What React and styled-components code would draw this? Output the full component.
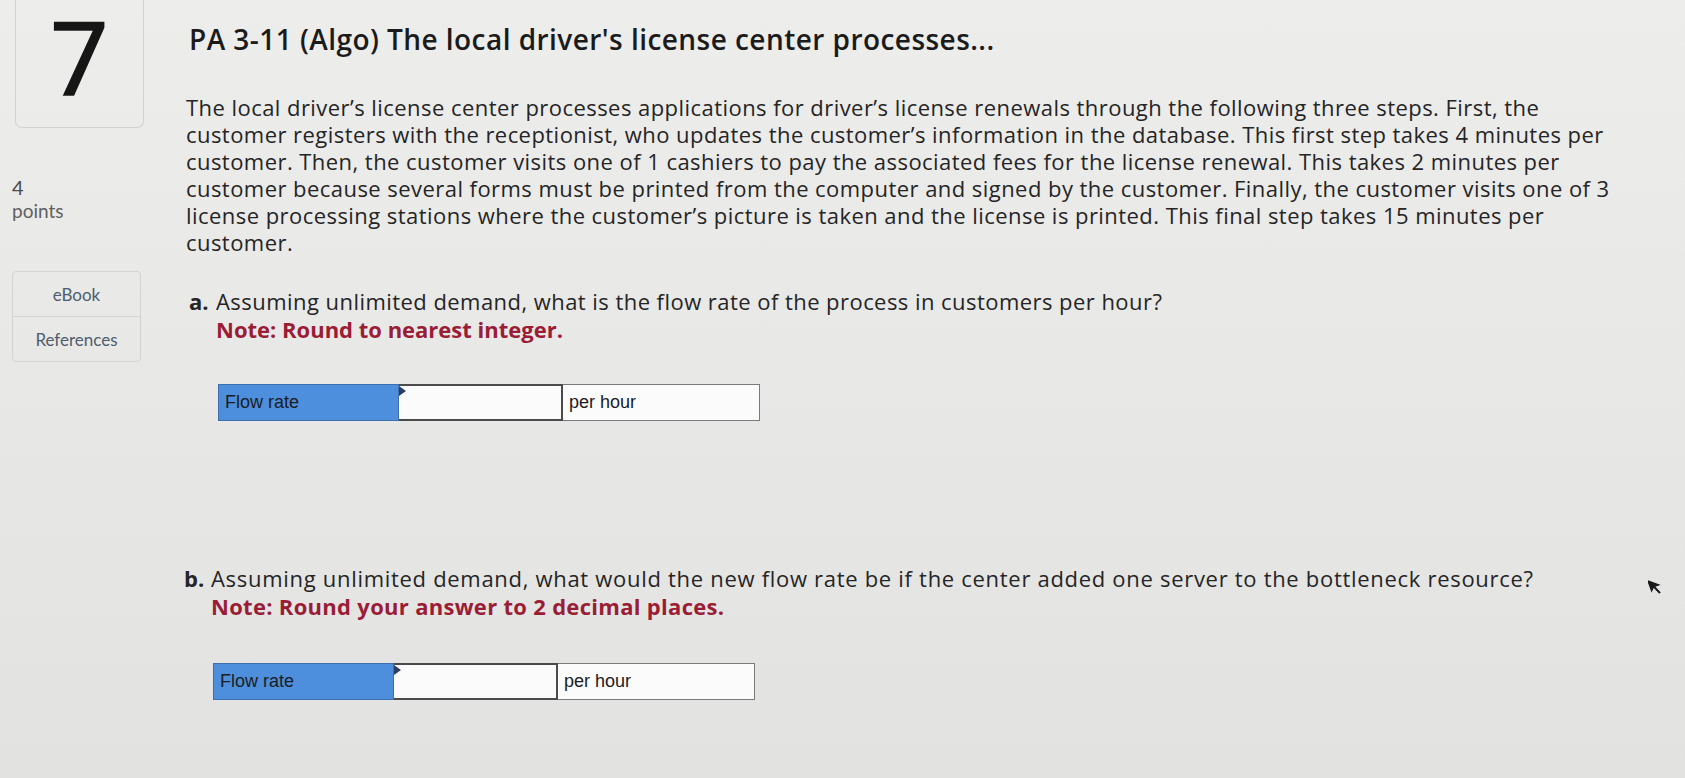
import React from 'react'
import styled, { createGlobalStyle } from 'styled-components'

const GlobalStyle = createGlobalStyle`
  html, body {
    margin: 0;
    padding: 0;
  }
  body {
    font-family: "Open Sans", Lato, sans-serif;
    color: #222;
    background: #e8e8e7;
  }
`

const Page = styled.div`
  position: relative;
  display: flex;
  width: 1685px;
  height: 778px;
  overflow: hidden;
  background: linear-gradient(180deg, #ededec 0%, #e7e7e6 55%, #e2e2e1 100%);
`

const Sidebar = styled.div`
  width: 186px;
  flex-shrink: 0;
  padding-left: 12px;
  box-sizing: border-box;
  display: flex;
  flex-direction: column;
`

const NumberBox = styled.div`
  width: 129px;
  height: 128px;
  margin-left: 3px;
  box-sizing: border-box;
  border: 1px solid #d2d2d1;
  border-top: none;
  border-radius: 0 0 7px 7px;
  display: flex;
  justify-content: center;
  align-items: flex-start;
  font-family: Roboto, sans-serif;
  font-weight: 400;
  font-size: 102px;
  line-height: normal;
  color: #161616;
  -webkit-text-stroke: 1.5px #161616;
`

const Points = styled.div`
  margin-top: 47px;
  font-family: Lato, sans-serif;
  font-size: 19px;
  line-height: 24px;
  color: #5f5f5f;
`

const PointsValue = styled.div`
  font-size: 20px;
  color: #4a4a4a;
`

const LinkStack = styled.div`
  margin-top: 48px;
  width: 129px;
  border: 1px solid #d3d3d2;
  border-radius: 4px;
  box-sizing: border-box;
  font-family: Lato, sans-serif;
`

const LinkButton = styled.div`
  height: 44px;
  display: flex;
  align-items: center;
  justify-content: center;
  font-size: 17px;
  color: #4e5d6d;
  border-top: ${p => (p.$first ? 'none' : '1px solid #d3d3d2')};
`

const Main = styled.div`
  flex: 1;
  display: flex;
  flex-direction: column;
`

const Title = styled.h1`
  margin: 22px 0 0 3px;
  font-size: 28px;
  line-height: 34px;
  font-weight: 600;
  color: #1b1b1b;
  letter-spacing: 0.45px;
  white-space: nowrap;
`

const Body = styled.p`
  margin: 38px 0 0 0;
  font-size: 22px;
  line-height: 27px;
  color: #252525;
  letter-spacing: 0.45px;
  white-space: nowrap;
`

const Question = styled.div`
  display: flex;
  margin-top: ${p => p.$top}px;
  margin-left: ${p => p.$nudge}px;
  font-size: 22px;
  line-height: 28px;
  color: #252525;
  white-space: nowrap;
`

const Marker = styled.span`
  width: 27px;
  flex-shrink: 0;
  font-weight: 700;
`

const QuestionText = styled.div`
  display: flex;
  flex-direction: column;
`

const Prompt = styled.span`
  letter-spacing: ${p => p.$spacing}px;
`

const Note = styled.span`
  font-weight: 700;
  color: #9b1c35;
  letter-spacing: ${p => p.$spacing}px;
`

const AnswerRow = styled.div`
  display: flex;
  height: 37px;
  margin-top: ${p => p.$top}px;
  margin-left: ${p => 32 + p.$nudge}px;
  font-family: "Liberation Sans", Arial, sans-serif;
  font-size: 18px;
  color: #1c1c24;
`

const Label = styled.div`
  width: 181px;
  box-sizing: border-box;
  background: #4d8fdc;
  border: 1px solid #3b6fae;
  display: flex;
  align-items: center;
  padding-left: 6px;
`

const Input = styled.div`
  position: relative;
  width: 164px;
  box-sizing: border-box;
  background: #fbfbfb;
  border: 2px solid #4b4b4b;
  border-left: none;

  &::before {
    content: '';
    position: absolute;
    left: 0;
    top: 0;
    border-top: 5px solid transparent;
    border-bottom: 5px solid transparent;
    border-left: 7px solid #2c3e66;
  }
`

const Unit = styled.div`
  width: 197px;
  box-sizing: border-box;
  background: #fbfbfb;
  border: 1px solid #7b7b7b;
  border-left: none;
  display: flex;
  align-items: center;
  padding-left: 6px;
`

const Cursor = styled.svg`
  position: absolute;
  left: 1648px;
  top: 575px;
`

function AnswerField({ top, nudge }) {
  return (
    <AnswerRow $top={top} $nudge={nudge}>
      <Label>Flow rate</Label>
      <Input />
      <Unit>per hour</Unit>
    </AnswerRow>
  )
}

export default function App() {
  return (
    <>
      <GlobalStyle />
      <Page>
        <Sidebar>
          <NumberBox>7</NumberBox>
          <Points>
            <PointsValue>4</PointsValue>
            points
          </Points>
          <LinkStack>
            <LinkButton $first>eBook</LinkButton>
            <LinkButton>References</LinkButton>
          </LinkStack>
        </Sidebar>
        <Main>
          <Title>PA 3-11 (Algo) The local driver's license center processes...</Title>
          <Body>
            The local driver’s license center processes applications for driver’s license renewals through the following three steps. First, the<br />
            customer registers with the receptionist, who updates the customer’s information in the database. This first step takes 4 minutes per<br />
            customer. Then, the customer visits one of 1 cashiers to pay the associated fees for the license renewal. This takes 2 minutes per<br />
            customer because several forms must be printed from the computer and signed by the customer. Finally, the customer visits one of 3<br />
            license processing stations where the customer’s picture is taken and the license is printed. This final step takes 15 minutes per<br />
            customer.
          </Body>
          <Question $top={31} $nudge={3}>
            <Marker>a.</Marker>
            <QuestionText>
              <Prompt $spacing={0.45}>Assuming unlimited demand, what is the flow rate of the process in customers per hour?</Prompt>
              <Note $spacing={0}>Note: Round to nearest integer.</Note>
            </QuestionText>
          </Question>
          <AnswerField top={41} nudge={0} />
          <Question $top={143} $nudge={-2}>
            <Marker>b.</Marker>
            <QuestionText>
              <Prompt $spacing={0.7}>Assuming unlimited demand, what would the new flow rate be if the center added one server to the bottleneck resource?</Prompt>
              <Note $spacing={0.3}>Note: Round your answer to 2 decimal places.</Note>
            </QuestionText>
          </Question>
          <AnswerField top={43} nudge={-5} />
        </Main>
        <Cursor width="16" height="22" viewBox="0 0 16 22">
          <path d="M1 1 L1 17 L5 13 L8 20 L11 19 L8 12 L14 12 Z" fill="#1a1a1a" stroke="#e8e8e8" strokeWidth="1" transform="rotate(-20 8 11)" />
        </Cursor>
      </Page>
    </>
  )
}
